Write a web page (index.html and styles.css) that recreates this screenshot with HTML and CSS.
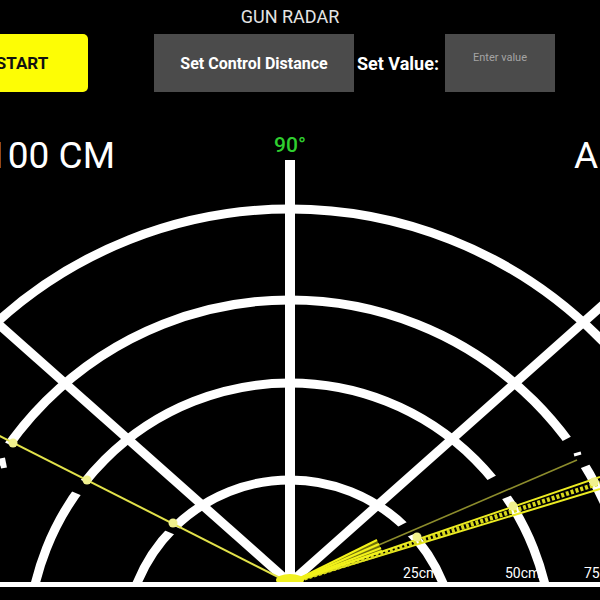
FILE: index.html
```html
<!DOCTYPE html>
<html>
<head>
<meta charset="utf-8">
<link rel="stylesheet" href="styles.css">
</head>
<body>
<div class="screen">
  <header class="top">
    <div class="title">GUN RADAR</div>
    <div class="controls">
      <button class="btn-start">START</button>
      <button class="btn-distance">Set Control Distance</button>
      <span class="set-label">Set Value:</span>
      <input class="value-input" type="text" placeholder="Enter value">
    </div>
  </header>
  <svg class="radar" width="600" height="500" viewBox="0 100 600 500" xmlns="http://www.w3.org/2000/svg">
    <defs>
      <clipPath id="above"><rect x="0" y="0" width="600" height="582"/></clipPath>
    </defs>
    <text class="dist-label" x="-13" y="168">100 CM</text>
    <text class="dist-label" x="574" y="168">ANGLE</text>
    <text class="deg-label" x="290" y="152">90°</text>
    <g clip-path="url(#above)" fill="none" stroke="#fff" stroke-width="9">
      <circle cx="290" cy="645" r="165"/>
      <circle cx="290" cy="645" r="262"/>
      <circle cx="290" cy="645" r="345"/>
      <circle cx="290" cy="645" r="436"/>
      <line x1="290" y1="160" x2="290" y2="583" stroke-width="10"/>
      <line x1="290" y1="583" x2="-40" y2="290"/>
      <line x1="290" y1="583" x2="640" y2="272"/>
    </g>
    <!-- sweep erasure -->
    <polygon points="290,583 -79,428 -69,406" fill="#000"/>
    <polygon points="290,583 662,436 645,398" fill="#000"/>
    <line x1="2" y1="458" x2="4" y2="468" stroke="#fff" stroke-width="6"/>
    <line x1="574" y1="455" x2="581" y2="453" stroke="#fff" stroke-width="3"/>
    <!-- sweep lines -->
    <line x1="290" y1="583" x2="-10" y2="431" stroke="#e2e24a" stroke-width="2"/>
    <line x1="290" y1="583" x2="577" y2="460" stroke="#8c8c2c" stroke-width="1.6"/>
    <line x1="290" y1="583" x2="600" y2="489" stroke="#ecec22" stroke-width="2"/>
    <line x1="290" y1="583" x2="600" y2="483" stroke="#d8d81c" stroke-width="4.5" stroke-dasharray="3 2"/>
    <line x1="290" y1="583" x2="600" y2="477" stroke="#ecec22" stroke-width="2"/>
    <polygon points="290,583 377,540 382,551" fill="#b8b810" opacity="0.6"/>
    <g stroke="#f2f21a" stroke-width="2">
      <line x1="290" y1="583" x2="377" y2="540"/>
      <line x1="290" y1="583" x2="379" y2="544"/>
      <line x1="290" y1="583" x2="381" y2="548"/>
      <line x1="290" y1="583" x2="382" y2="551"/>
    </g>
    <ellipse cx="290" cy="580" rx="14" ry="6" fill="#f0f020"/>
    <g fill="#f1f18e">
      <circle cx="173" cy="523" r="4.5"/>
      <circle cx="87" cy="480" r="4.5"/>
      <circle cx="13" cy="443" r="4.5"/>
      <circle cx="417" cy="537" r="4.5"/>
      <circle cx="513" cy="506" r="4.5"/>
      <circle cx="594" cy="482" r="4.5"/>
    </g>
    <rect x="0" y="582" width="600" height="5" fill="#fff"/>
    <text class="cm-label" x="403" y="578">25cm</text>
    <text class="cm-label" x="505" y="578">50cm</text>
    <text class="cm-label" x="584" y="578">75cm</text>
  </svg>
</div>
</body>
</html>
```

FILE: styles.css
```css
body {
  margin: 0;
  background: #000;
  overflow: hidden;
  font-family: Roboto, "Liberation Sans", sans-serif;
}

.screen {
  width: 600px;
  height: 600px;
  overflow: hidden;
  background: #000;
}

.title {
  width: 580px;
  height: 27px;
  padding-top: 7px;
  text-align: center;
  color: #e4e4e4;
  font-size: 18px;
  line-height: 20px;
}

.controls {
  display: flex;
  align-items: stretch;
  height: 58px;
}

.btn-start {
  margin-left: -44px;
  width: 132px;
  padding: 0;
  border: none;
  border-radius: 5px;
  background: #fdfd05;
  color: #111;
  font-family: Roboto, "Liberation Sans", sans-serif;
  font-weight: 700;
  font-size: 17px;
}

.btn-distance {
  margin-left: 66px;
  width: 200px;
  padding: 0;
  border: none;
  background: #4b4b4b;
  color: #fff;
  font-family: Roboto, "Liberation Sans", sans-serif;
  font-weight: 700;
  font-size: 16px;
}

.set-label {
  display: flex;
  align-items: center;
  width: 84px;
  margin-left: 3px;
  color: #fff;
  font-weight: 700;
  font-size: 18px;
  white-space: nowrap;
}

.value-input {
  box-sizing: border-box;
  width: 110px;
  height: 58px;
  margin: 0 0 0 4px;
  padding: 0 0 11px;
  border: none;
  outline: none;
  background: #4b4b4b;
  color: #fff;
  text-align: center;
  font-family: Roboto, "Liberation Sans", sans-serif;
  font-size: 11px;
}

.value-input::placeholder {
  color: #a4a4a4;
}

.radar {
  display: block;
  margin-top: 8px;
}

.dist-label {
  fill: #fff;
  font-family: Roboto, "Liberation Sans", sans-serif;
  font-size: 37px;
}

.deg-label {
  fill: #2fcf2f;
  font-family: Roboto, "Liberation Sans", sans-serif;
  font-size: 21px;
  font-weight: 500;
  text-anchor: middle;
}

.cm-label {
  fill: #fff;
  font-family: Roboto, "Liberation Sans", sans-serif;
  font-size: 14px;
}
```
